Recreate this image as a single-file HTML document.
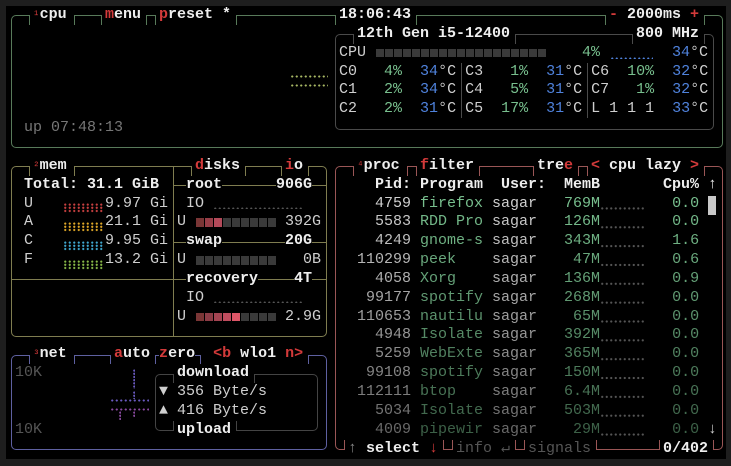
<!DOCTYPE html>
<html><head><meta charset="utf-8"><style>
body{margin:0;background:#1e1e1e;width:731px;height:466px;overflow:hidden;position:relative;font-family:"Liberation Mono","DejaVu Sans Mono",monospace;font-size:15px}
#term{position:absolute;left:6px;top:6px;width:720px;height:453px;background:#000}
.t{position:absolute;left:calc(6px + var(--c)*9px);top:calc(6px + var(--r)*18.85px);line-height:18.85px;white-space:pre;color:#cfcfcf;z-index:2}
.k{background:#000}
.b{font-weight:bold;color:#eee}
.R{color:#d33a3a}
.G{color:#78bf8e}
.B{color:#4f82dc}
.bx{position:absolute;left:calc(10.5px + var(--c)*9px);top:calc(15.4px + var(--r)*18.85px);width:calc(var(--w)*9px + 1px);height:calc(var(--h)*18.85px + 1px);border:1px solid;border-radius:5px;box-sizing:border-box;z-index:1}
.tk{position:absolute;z-index:3;box-sizing:border-box;border:0 solid}
.ka{left:calc(6px + var(--c)*9px);top:calc(15.4px + var(--r)*18.85px);width:5.5px;height:9.5px;border-top-width:1px;border-right-width:1px}
.kb{left:calc(10.5px + var(--c)*9px);top:calc(15.4px + var(--r)*18.85px);width:4.5px;height:9.5px;border-top-width:1px;border-left-width:1px}
.kc{left:calc(6px + var(--c)*9px);top:calc(6px + var(--r)*18.85px);width:5.5px;height:10.4px;border-bottom-width:1px;border-right-width:1px}
.kd{left:calc(10.5px + var(--c)*9px);top:calc(6px + var(--r)*18.85px);width:4.5px;height:10.4px;border-bottom-width:1px;border-left-width:1px}
.hl{position:absolute;z-index:1;height:1px;left:calc(10.5px + var(--c)*9px);top:calc(15.4px + var(--r)*18.85px);width:calc(var(--w)*9px)}
.vl{position:absolute;z-index:1;width:1px;left:calc(10.5px + var(--c)*9px);top:calc(15.4px + var(--r)*18.85px);height:calc(var(--h)*18.85px)}
.blk{position:absolute;z-index:2;width:8px;height:8.5px;left:calc(6.5px + var(--c)*9px);top:calc(11px + var(--r)*18.85px)}
.dt{position:absolute;z-index:2;background-image:radial-gradient(circle at center,var(--k) 0.9px,transparent 1.3px);background-size:4.5px 3.2px}
</style></head><body>
<div id="term"></div>

<!-- CPU box -->
<div class="bx" style="--c:0;--r:0;--w:79;--h:7;color:#587a5a"></div>
<div class="t k" style="--c:2;--r:0"> <span class="R" style="font-size:11px">¹</span><span class="b">cpu</span> </div>
<div class="t k b" style="--c:10;--r:0"> <span class="R">m</span>enu </div>
<div class="t k b" style="--c:16;--r:0"> <span class="R">p</span>reset * </div>
<div class="t k b" style="--c:36;--r:0"> 18:06:43 </div>
<div class="t k b" style="--c:66;--r:0"> <span class="R">-</span> 2000ms <span class="R">+</span> </div>
<div class="tk ka" style="--c:2;--r:0;color:#587a5a"></div><div class="tk kb" style="--c:7;--r:0;color:#587a5a"></div>
<div class="tk ka" style="--c:10;--r:0;color:#587a5a"></div><div class="tk kb" style="--c:15;--r:0;color:#587a5a"></div>
<div class="tk ka" style="--c:16;--r:0;color:#587a5a"></div><div class="tk kb" style="--c:25;--r:0;color:#587a5a"></div>
<div class="tk ka" style="--c:36;--r:0;color:#587a5a"></div><div class="tk kb" style="--c:45;--r:0;color:#587a5a"></div>
<div class="tk ka" style="--c:66;--r:0;color:#587a5a"></div><div class="tk kb" style="--c:77;--r:0;color:#587a5a"></div>
<div class="dt" style="left:290px;top:75px;width:38px;height:3px;--k:#a8b864"></div>
<div class="dt" style="left:290px;top:84px;width:38px;height:3px;--k:#a8b864"></div>
<div class="t" style="--c:2;--r:6;color:#777">up 07:48:13</div>

<!-- inner cpu box -->
<div class="bx" style="--c:36;--r:1;--w:42;--h:5;color:#4a4a4a"></div>
<div class="t k b" style="--c:38;--r:1"> 12th Gen i5-12400 </div>
<div class="t k b" style="--c:69;--r:1"> 800 MHz </div>
<div class="tk ka" style="--c:38;--r:1;color:#4a4a4a"></div><div class="tk kb" style="--c:56;--r:1;color:#4a4a4a"></div>
<div class="tk ka" style="--c:69;--r:1;color:#4a4a4a"></div><div class="tk kb" style="--c:77;--r:1;color:#4a4a4a"></div>
<div class="t" style="--c:37;--r:2">CPU</div>
<div class="blk" style="--c:41;--r:2;background:#3a3a3a"></div><div class="blk" style="--c:42;--r:2;background:#3a3a3a"></div><div class="blk" style="--c:43;--r:2;background:#3a3a3a"></div><div class="blk" style="--c:44;--r:2;background:#3a3a3a"></div><div class="blk" style="--c:45;--r:2;background:#3a3a3a"></div><div class="blk" style="--c:46;--r:2;background:#3a3a3a"></div><div class="blk" style="--c:47;--r:2;background:#3a3a3a"></div><div class="blk" style="--c:48;--r:2;background:#3a3a3a"></div><div class="blk" style="--c:49;--r:2;background:#3a3a3a"></div><div class="blk" style="--c:50;--r:2;background:#3a3a3a"></div><div class="blk" style="--c:51;--r:2;background:#3a3a3a"></div><div class="blk" style="--c:52;--r:2;background:#3a3a3a"></div><div class="blk" style="--c:53;--r:2;background:#3a3a3a"></div><div class="blk" style="--c:54;--r:2;background:#3a3a3a"></div><div class="blk" style="--c:55;--r:2;background:#3a3a3a"></div><div class="blk" style="--c:56;--r:2;background:#3a3a3a"></div><div class="blk" style="--c:57;--r:2;background:#3a3a3a"></div><div class="blk" style="--c:58;--r:2;background:#3a3a3a"></div><div class="blk" style="--c:59;--r:2;background:#3a3a3a"></div>
<div class="t G" style="--c:64;--r:2">4%</div>
<div class="dt" style="left:610px;top:57px;width:43px;height:2px;--k:#4f82dc"></div>
<div class="t" style="--c:74;--r:2"><span class="B">34</span>°C</div>
<div class="t" style="--c:37;--r:3">C0   <span class="G">4%</span>  <span class="B">34</span>°C C3   <span class="G">1%</span>  <span class="B">31</span>°C C6  <span class="G">10%</span>  <span class="B">32</span>°C</div>
<div class="t" style="--c:37;--r:4">C1   <span class="G">2%</span>  <span class="B">34</span>°C C4   <span class="G">5%</span>  <span class="B">31</span>°C C7   <span class="G">1%</span>  <span class="B">32</span>°C</div>
<div class="t" style="--c:37;--r:5">C2   <span class="G">2%</span>  <span class="B">31</span>°C C5  <span class="G">17%</span>  <span class="B">31</span>°C L 1 1 1  <span class="B">33</span>°C</div>
<div class="vl" style="--c:50;--r:2.55;--h:2.9;background:#4a4a4a"></div>
<div class="vl" style="--c:64;--r:2.55;--h:2.9;background:#4a4a4a"></div>

<!-- mem/disks box -->
<div class="bx" style="--c:0;--r:8;--w:35;--h:9;color:#7f7d50"></div>
<div class="vl" style="--c:18;--r:8;--h:9;background:#7f7d50"></div>
<div class="hl" style="--c:0;--r:14;--w:18;background:#7f7d50"></div>
<div class="t k" style="--c:2;--r:8"> <span class="R" style="font-size:11px">²</span><span class="b">mem</span> </div>
<div class="t k b" style="--c:20;--r:8"> <span class="R">d</span>isks </div>
<div class="t k b" style="--c:30;--r:8"> <span class="R">i</span>o </div>
<div class="tk ka" style="--c:2;--r:8;color:#7f7d50"></div><div class="tk kb" style="--c:7;--r:8;color:#7f7d50"></div>
<div class="tk ka" style="--c:20;--r:8;color:#7f7d50"></div><div class="tk kb" style="--c:26;--r:8;color:#7f7d50"></div>
<div class="tk ka" style="--c:30;--r:8;color:#7f7d50"></div><div class="tk kb" style="--c:33;--r:8;color:#7f7d50"></div>
<div class="t b" style="--c:2;--r:9">Total: 31.1 GiB</div>
<div class="t" style="--c:2;--r:10">U</div><div class="dt" style="left:63px;top:203px;width:41px;height:10px;--k:#c84040"></div><div class="t" style="--c:11;--r:10">9.97 Gi</div>
<div class="t" style="--c:2;--r:11">A</div><div class="dt" style="left:63px;top:222px;width:41px;height:10px;--k:#e0a828"></div><div class="t" style="--c:11;--r:11">21.1 Gi</div>
<div class="t" style="--c:2;--r:12">C</div><div class="dt" style="left:63px;top:241px;width:41px;height:10px;--k:#40a8d0"></div><div class="t" style="--c:11;--r:12">9.95 Gi</div>
<div class="t" style="--c:2;--r:13">F</div><div class="dt" style="left:63px;top:260px;width:41px;height:10px;--k:#88b848"></div><div class="t" style="--c:11;--r:13">13.2 Gi</div>

<div class="hl" style="--c:18;--r:9;--w:17;background:#7f7d50"></div>
<div class="hl" style="--c:18;--r:12;--w:17;background:#7f7d50"></div>
<div class="hl" style="--c:18;--r:14;--w:17;background:#7f7d50"></div>
<div class="t k b" style="--c:20;--r:9">root</div><div class="t k b" style="--c:30;--r:9">906G</div>
<div class="t" style="--c:20;--r:10">IO</div><div class="dt" style="left:213px;top:207px;width:90px;height:2px;--k:#555"></div>
<div class="t" style="--c:19;--r:11">U</div>
<div class="blk" style="--c:21;--r:11;background:#7a3636"></div><div class="blk" style="--c:22;--r:11;background:#983e48"></div><div class="blk" style="--c:23;--r:11;background:#b44a5a"></div><div class="blk" style="--c:24;--r:11;background:#3a3a3a"></div><div class="blk" style="--c:25;--r:11;background:#3a3a3a"></div><div class="blk" style="--c:26;--r:11;background:#3a3a3a"></div><div class="blk" style="--c:27;--r:11;background:#3a3a3a"></div><div class="blk" style="--c:28;--r:11;background:#3a3a3a"></div><div class="blk" style="--c:29;--r:11;background:#3a3a3a"></div>
<div class="t" style="--c:31;--r:11">392G</div>
<div class="t k b" style="--c:20;--r:12">swap</div><div class="t k b" style="--c:31;--r:12">20G</div>
<div class="t" style="--c:19;--r:13">U</div>
<div class="blk" style="--c:21;--r:13;background:#3a3a3a"></div><div class="blk" style="--c:22;--r:13;background:#3a3a3a"></div><div class="blk" style="--c:23;--r:13;background:#3a3a3a"></div><div class="blk" style="--c:24;--r:13;background:#3a3a3a"></div><div class="blk" style="--c:25;--r:13;background:#3a3a3a"></div><div class="blk" style="--c:26;--r:13;background:#3a3a3a"></div><div class="blk" style="--c:27;--r:13;background:#3a3a3a"></div><div class="blk" style="--c:28;--r:13;background:#3a3a3a"></div><div class="blk" style="--c:29;--r:13;background:#3a3a3a"></div>
<div class="t" style="--c:33;--r:13">0B</div>
<div class="t k b" style="--c:20;--r:14">recovery</div><div class="t k b" style="--c:32;--r:14">4T</div>
<div class="t" style="--c:20;--r:15">IO</div><div class="dt" style="left:213px;top:301px;width:90px;height:2px;--k:#555"></div>
<div class="t" style="--c:19;--r:16">U</div>
<div class="blk" style="--c:21;--r:16;background:#7a3636"></div><div class="blk" style="--c:22;--r:16;background:#8c3c46"></div><div class="blk" style="--c:23;--r:16;background:#a44452"></div><div class="blk" style="--c:24;--r:16;background:#c04c5e"></div><div class="blk" style="--c:25;--r:16;background:#de5668"></div><div class="blk" style="--c:26;--r:16;background:#3a3a3a"></div><div class="blk" style="--c:27;--r:16;background:#3a3a3a"></div><div class="blk" style="--c:28;--r:16;background:#3a3a3a"></div><div class="blk" style="--c:29;--r:16;background:#3a3a3a"></div>
<div class="t" style="--c:31;--r:16">2.9G</div>

<!-- net box -->
<div class="bx" style="--c:0;--r:18;--w:35;--h:5;color:#5e60a0"></div>
<div class="t k" style="--c:2;--r:18"> <span class="R" style="font-size:11px">³</span><span class="b">net</span> </div>
<div class="t k b" style="--c:11;--r:18"> <span class="R">a</span>uto <span class="R">z</span>ero  <span class="R">&lt;b</span> wlo1 <span class="R">n&gt;</span> </div>
<div class="tk ka" style="--c:2;--r:18;color:#5e60a0"></div><div class="tk kb" style="--c:7;--r:18;color:#5e60a0"></div>
<div class="tk ka" style="--c:11;--r:18;color:#5e60a0"></div><div class="tk kb" style="--c:16;--r:18;color:#5e60a0"></div>
<div class="tk ka" style="--c:21;--r:18;color:#5e60a0"></div><div class="tk kb" style="--c:33;--r:18;color:#5e60a0"></div>
<div class="t" style="--c:1;--r:19;color:#555">10K</div>
<div class="t" style="--c:1;--r:22;color:#555">10K</div>
<div class="dt" style="left:132px;top:369px;width:3px;height:20px;--k:#6a5ac0"></div>
<div class="dt" style="left:110px;top:399px;width:39px;height:3px;--k:#6a5ac0"></div>
<div class="dt" style="left:132px;top:391px;width:3px;height:8px;--k:#6a5ac0"></div>
<div class="dt" style="left:110px;top:408px;width:39px;height:3px;--k:#8a4aa0"></div>
<div class="dt" style="left:118px;top:411px;width:3px;height:9px;--k:#8a4aa0"></div>
<div class="dt" style="left:132px;top:411px;width:3px;height:6px;--k:#8a4aa0"></div>
<div class="bx" style="--c:16;--r:19;--w:18;--h:3;color:#444"></div>
<div class="t k b" style="--c:18;--r:19"> download </div>
<div class="tk ka" style="--c:18;--r:19;color:#444"></div><div class="tk kb" style="--c:27;--r:19;color:#444"></div>
<div class="t" style="--c:17;--r:20">▼ 356 Byte/s</div>
<div class="t" style="--c:17;--r:21">▲ 416 Byte/s</div>
<div class="t k b" style="--c:18;--r:22"> upload </div>
<div class="tk kc" style="--c:18;--r:22;color:#444"></div><div class="tk kd" style="--c:25;--r:22;color:#444"></div>

<!-- proc box -->
<div class="bx" style="--c:36;--r:8;--w:43;--h:15;color:#9a5656"></div>
<div class="t k" style="--c:38;--r:8"> <span class="R" style="font-size:11px">⁴</span><span class="b">proc</span> </div>
<div class="t k b" style="--c:45;--r:8"> <span class="R">f</span>ilter </div>
<div class="t k b" style="--c:58;--r:8"> tre<span class="R">e</span> </div>
<div class="t k b" style="--c:64;--r:8"> <span class="R">&lt;</span> cpu lazy <span class="R">&gt;</span> </div>
<div class="tk ka" style="--c:38;--r:8;color:#9a5656"></div><div class="tk kb" style="--c:44;--r:8;color:#9a5656"></div>
<div class="tk ka" style="--c:45;--r:8;color:#9a5656"></div><div class="tk kb" style="--c:52;--r:8;color:#9a5656"></div>
<div class="tk ka" style="--c:58;--r:8;color:#9a5656"></div><div class="tk kb" style="--c:63;--r:8;color:#9a5656"></div>
<div class="tk ka" style="--c:64;--r:8;color:#9a5656"></div><div class="tk kb" style="--c:77;--r:8;color:#9a5656"></div>
<div class="t b" style="--c:41;--r:9">Pid: Program  User:  MemB       Cpu% ↑</div>
<div style="position:absolute;left:708px;top:196px;width:8px;height:19px;background:#c8c8c8;z-index:2"></div>

<div class="t" style="--c:38;--r:10">   4759 <span class="G">firefox</span> sagar   <span class="G">769M</span>        <span class="G">0.0</span></div>
<div class="t" style="--c:38;--r:11;opacity:.96">   5583 <span class="G">RDD Pro</span> sagar   <span class="G">126M</span>        <span class="G">0.0</span></div>
<div class="t" style="--c:38;--r:12;opacity:.92">   4249 <span class="G">gnome-s</span> sagar   <span class="G">343M</span>        <span class="G">1.6</span></div>
<div class="t" style="--c:38;--r:13;opacity:.88"> 110299 <span class="G">peek   </span> sagar    <span class="G">47M</span>        <span class="G">0.6</span></div>
<div class="t" style="--c:38;--r:14;opacity:.84">   4058 <span class="G">Xorg   </span> sagar   <span class="G">136M</span>        <span class="G">0.9</span></div>
<div class="t" style="--c:38;--r:15;opacity:.8">  99177 <span class="G">spotify</span> sagar   <span class="G">268M</span>        <span class="G">0.0</span></div>
<div class="t" style="--c:38;--r:16;opacity:.76"> 110653 <span class="G">nautilu</span> sagar    <span class="G">65M</span>        <span class="G">0.0</span></div>
<div class="t" style="--c:38;--r:17;opacity:.72">   4948 <span class="G">Isolate</span> sagar   <span class="G">392M</span>        <span class="G">0.0</span></div>
<div class="t" style="--c:38;--r:18;opacity:.68">   5259 <span class="G">WebExte</span> sagar   <span class="G">365M</span>        <span class="G">0.0</span></div>
<div class="t" style="--c:38;--r:19;opacity:.64">  99108 <span class="G">spotify</span> sagar   <span class="G">150M</span>        <span class="G">0.0</span></div>
<div class="t" style="--c:38;--r:20;opacity:.6"> 112111 <span class="G">btop   </span> sagar   <span class="G">6.4M</span>        <span class="G">0.0</span></div>
<div class="t" style="--c:38;--r:21;opacity:.55">   5034 <span class="G">Isolate</span> sagar   <span class="G">503M</span>        <span class="G">0.0</span></div>
<div class="t" style="--c:38;--r:22;opacity:.5">   4009 <span class="G">pipewir</span> sagar    <span class="G">29M</span>        <span class="G">0.0</span></div>
<div class="dt" style="left:600px;top:199px;width:44px;height:2px;--k:#555;height:246px;background-size:4.5px 18.85px;background-position:0 0"></div>
<div class="t" style="--c:78;--r:22">↓</div>

<div class="t k" style="--c:37;--r:23"> <span style="color:#888">↑</span> <span class="b">select</span> <span class="R">↓</span> </div>
<div class="t k" style="--c:49;--r:23;color:#555"> info ↵ </div>
<div class="t k" style="--c:57;--r:23;color:#555"> signals </div>
<div class="t k b" style="--c:72;--r:23"> 0/402 </div>
<div class="tk kc" style="--c:37;--r:23;color:#9a5656"></div><div class="tk kd" style="--c:48;--r:23;color:#9a5656"></div>
<div class="tk kc" style="--c:49;--r:23;color:#9a5656"></div><div class="tk kd" style="--c:56;--r:23;color:#9a5656"></div>
<div class="tk kc" style="--c:57;--r:23;color:#9a5656"></div><div class="tk kd" style="--c:65;--r:23;color:#9a5656"></div>
<div class="tk kc" style="--c:72;--r:23;color:#9a5656"></div><div class="tk kd" style="--c:78;--r:23;color:#9a5656"></div>
</body></html>
